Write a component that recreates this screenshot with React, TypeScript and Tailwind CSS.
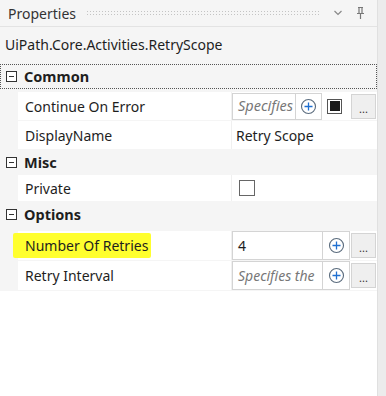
import React from 'react';

const font = { fontFamily: '"Noto Sans", "Open Sans", sans-serif' };

function Plus() {
  return (
    <svg width="17" height="17" viewBox="0 0 17 17">
      <circle cx="8.5" cy="8.5" r="7" fill="white" stroke="#5a6b7d" strokeWidth="1.1" />
      <path d="M8.5 4.5v8M4.5 8.5h8" stroke="#1f6fd1" strokeWidth="1.3" />
    </svg>
  );
}

function Ellipsis() {
  return (
    <div className="w-[25px] h-[25px] bg-[#efefef] border border-[#d4d4d4] flex items-end justify-center pb-[4px] text-[11px] leading-none text-[#333]">
      ...
    </div>
  );
}

function Category({ name, focused, h }: { name: string; focused?: boolean; h: string }) {
  return (
    <div className={`${h} flex`}>
      <div
        className={`flex-1 h-[25px] flex items-center pl-[5px] ${focused ? 'border border-dotted border-[#555]' : 'border border-transparent'}`}
      >
        <div className="w-[11px] h-[11px] border border-[#333] flex items-center justify-center bg-white">
          <div className="w-[5px] h-px bg-[#333]" />
        </div>
        <span className="ml-[7px] text-[14.5px] font-bold text-[#1e1e1e]">{name}</span>
      </div>
    </div>
  );
}

function Row({ name, children, highlight, h }: { name: string; children?: React.ReactNode; highlight?: boolean; h: string }) {
  return (
    <div className={`${h} flex mb-[1px]`}>
      <div className="w-[18px]" />
      <div className="w-[214px] bg-white flex items-center border-r border-[#f0f0f0]">
        <span
          className={`text-[14px] text-[#1e1e1e] ${highlight ? 'bg-[#ffff2e] pl-[12px] -ml-[5px] pr-[3px] py-[2px] rounded-[2px]' : 'pl-[7px]'}`}
        >
          {name}
        </span>
      </div>
      <div className="flex-1 bg-white flex items-center">{children}</div>
    </div>
  );
}

export default function App() {
  return (
    <div className="w-[386px] h-[396px] bg-[#f5f5f5] flex" style={font}>
      <div className="w-[377px] flex flex-col">
        <div className="h-[27px] flex items-center pl-[8px] pr-[12px] border-b border-[#e3e3e3]">
          <span className="text-[14px] text-[#333]">Properties</span>
          <div
            className="ml-[10px] mr-[12px] flex-1 h-[6px]"
            style={{
              backgroundImage: 'radial-gradient(circle, #c4c4c4 0.9px, transparent 1px)',
              backgroundSize: '3px 3px',
            }}
          />
          <svg width="10" height="10" viewBox="0 0 10 10" className="mr-[13px]">
            <path d="M1.5 3l3.5 3.5 3.5-3.5" fill="none" stroke="#888" strokeWidth="1.2" />
          </svg>
          <svg width="9" height="14" viewBox="0 0 9 14">
            <path d="M2 1.5h5M3 1.5v6M6 1.5v6M1 7.5h7M4.5 7.5v5.5" fill="none" stroke="#777" strokeWidth="1.2" />
          </svg>
        </div>
        <div className="h-[35px] flex items-center px-[5px]">
          <span className="text-[14px] text-[#1e1e1e]">UiPath.Core.Activities.RetryScope</span>
        </div>
        <div className="flex flex-col">
          <div className="h-[2px]" />
          <Category name="Common" focused h="h-[27px]" />
          <div className="h-[1px]" />
          <Row name="Continue On Error" h="h-[28px]">
            <div className="h-[27px] w-[64px] border border-[#d4d4d4] flex items-center pl-[5px] overflow-hidden">
              <span className="text-[14.5px] italic text-[#777] whitespace-nowrap">Specifies</span>
            </div>
            <div className="h-[27px] w-[26px] border border-l-0 border-[#d4d4d4] flex items-center justify-center">
              <Plus />
            </div>
            <div className="ml-[5px] w-[15px] h-[15px] border border-[#555] flex items-center justify-center bg-white">
              <div className="w-[10px] h-[10px] bg-[#1a1a1a]" />
            </div>
            <div className="ml-[9px]">
              <Ellipsis />
            </div>
          </Row>
          <Row name="DisplayName" h="h-[28px]">
            <span className="pl-[4px] text-[14px] text-[#1e1e1e]">Retry Scope</span>
          </Row>
          <Category name="Misc" h="h-[25px]" />
          <Row name="Private" h="h-[26px]">
            <div className="ml-[7px] w-[16px] h-[16px] border border-[#666] bg-white" />
          </Row>
          <Category name="Options" h="h-[29px]" />
          <Row name="Number Of Retries" highlight h="h-[29px]">
            <div className="h-[29px] w-[91px] border border-[#d4d4d4] flex items-center pl-[5px]">
              <span className="text-[14px] text-[#1e1e1e]">4</span>
            </div>
            <div className="h-[29px] w-[27px] border border-l-0 border-[#d4d4d4] flex items-center justify-center">
              <Plus />
            </div>
            <div className="ml-[1px]">
              <Ellipsis />
            </div>
          </Row>
          <Row name="Retry Interval" h="h-[29px]">
            <div className="h-[29px] w-[91px] border border-[#d4d4d4] flex items-center pl-[5px] overflow-hidden">
              <span className="text-[14px] italic text-[#777] whitespace-nowrap">Specifies the</span>
            </div>
            <div className="h-[29px] w-[27px] border border-l-0 border-[#d4d4d4] flex items-center justify-center">
              <Plus />
            </div>
            <div className="ml-[1px]">
              <Ellipsis />
            </div>
          </Row>
        </div>
        <div className="flex-1 bg-white" />
      </div>
      <div className="flex-1 bg-[#ececec] border-l border-[#e0e0e0]" />
    </div>
  );
}
